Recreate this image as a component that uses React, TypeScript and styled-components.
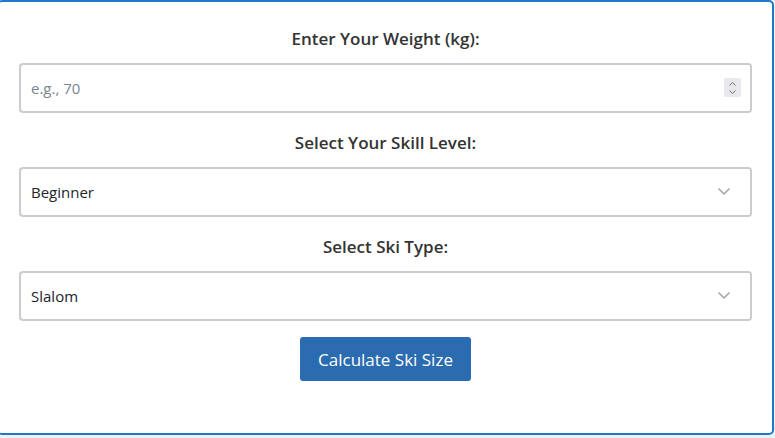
import React from "react";
import styled, { createGlobalStyle } from "styled-components";

const GlobalStyle = createGlobalStyle`
  html, body {
    margin: 0;
    padding: 0;
    background: #eef1f5;
    font-family: "Open Sans", "Liberation Sans", Arial, sans-serif;
    overflow: hidden;
  }
  * {
    box-sizing: border-box;
  }
`;

const Card = styled.div`
  width: 777px;
  height: 435px;
  margin-left: -3px;
  background: #ffffff;
  border: 2px solid #1f78c8;
  border-radius: 5px;
  padding: 25px 20px 0 20px;
`;

const Form = styled.form`
  display: flex;
  flex-direction: column;
  align-items: stretch;
`;

const Group = styled.div`
  display: flex;
  flex-direction: column;
  margin-bottom: 18px;
`;

const Label = styled.label`
  display: block;
  text-align: center;
  font-weight: 600;
  font-size: 17px;
  line-height: 24px;
  color: #333333;
  margin-bottom: 12px;
`;

const FieldWrap = styled.div`
  position: relative;
  height: 50px;
`;

const TextInput = styled.input`
  width: 100%;
  height: 50px;
  border: 2px solid #cccccc;
  border-radius: 4px;
  padding: 0 10px;
  font-family: inherit;
  font-size: 15px;
  color: #212529;
  background: #ffffff;
  outline: none;
  &::placeholder {
    color: #7a8594;
  }
`;

const Select = styled.select`
  width: 100%;
  height: 50px;
  border: 2px solid #cccccc;
  border-radius: 4px;
  padding: 0 10px;
  font-family: inherit;
  font-size: 15px;
  color: #212529;
  background: #ffffff;
  appearance: none;
  -webkit-appearance: none;
  outline: none;
`;

const Spinner = styled.div`
  position: absolute;
  right: 11px;
  top: 15px;
  width: 17px;
  height: 19px;
  background: #e9e9ed;
  border-radius: 2px;
  display: flex;
  align-items: center;
  justify-content: center;
  pointer-events: none;
`;

const Chevron = styled.svg`
  position: absolute;
  right: 21px;
  top: 20px;
  pointer-events: none;
`;

const Button = styled.button`
  align-self: center;
  margin-top: -2px;
  height: 44px;
  padding: 0 18px;
  background: #2b6cb0;
  color: #ffffff;
  border: none;
  border-radius: 3px;
  font-family: inherit;
  font-size: 17px;
  cursor: pointer;
`;

function SelectField({ options }: { options: string[] }) {
  return (
    <FieldWrap>
      <Select defaultValue={options[0]}>
        {options.map((o) => (
          <option key={o}>{o}</option>
        ))}
      </Select>
      <Chevron width="14" height="9" viewBox="0 0 14 9">
        <path d="M1.5 1.5 L7 7 L12.5 1.5" fill="none" stroke="#a3a3a3" strokeWidth="1.5" />
      </Chevron>
    </FieldWrap>
  );
}

export default function App() {
  return (
    <>
      <GlobalStyle />
      <Card>
        <Form onSubmit={(e) => e.preventDefault()}>
          <Group>
            <Label>Enter Your Weight (kg):</Label>
            <FieldWrap>
              <TextInput type="text" placeholder="e.g., 70" />
              <Spinner>
                <svg width="9" height="14" viewBox="0 0 9 14">
                  <path d="M1.5 4.5 L4.5 1.5 L7.5 4.5" fill="none" stroke="#6d6d6d" strokeWidth="1" />
                  <path d="M1.5 9.5 L4.5 12.5 L7.5 9.5" fill="none" stroke="#6d6d6d" strokeWidth="1" />
                </svg>
              </Spinner>
            </FieldWrap>
          </Group>
          <Group>
            <Label>Select Your Skill Level:</Label>
            <SelectField options={["Beginner", "Intermediate", "Advanced", "Expert"]} />
          </Group>
          <Group>
            <Label>Select Ski Type:</Label>
            <SelectField options={["Slalom", "Giant Slalom", "All Mountain", "Freestyle"]} />
          </Group>
          <Button type="submit">Calculate Ski Size</Button>
        </Form>
      </Card>
    </>
  );
}
